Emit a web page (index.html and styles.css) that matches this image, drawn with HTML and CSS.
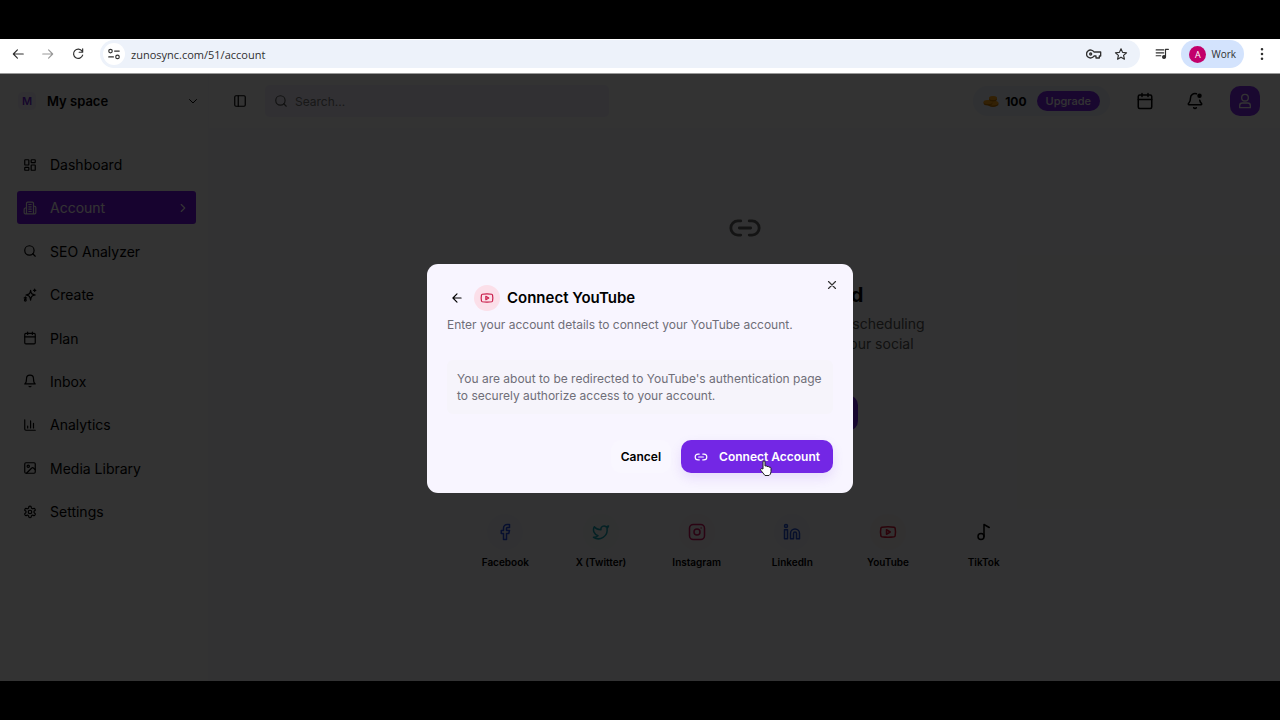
FILE: index.html
```html
<!DOCTYPE html>
<html lang="en">
<head>
<meta charset="utf-8">
<title>Account</title>
<meta name="viewport" content="width=device-width, initial-scale=1">
<link rel="stylesheet" href="styles.css">
</head>
<body>
<svg class="sprite" aria-hidden="true">
  <symbol id="i-link" viewBox="0 0 24 24"><path d="M9 17H7A5 5 0 0 1 7 7h2M15 7h2a5 5 0 1 1 0 10h-2M8 12h8"/></symbol>
  <symbol id="i-search" viewBox="0 0 24 24"><circle cx="11" cy="11" r="8"/><path d="m21 21-4.3-4.3"/></symbol>
  <symbol id="i-calendar" viewBox="0 0 24 24"><rect x="3" y="4" width="18" height="18" rx="2"/><path d="M8 2v4M16 2v4M3 10h18"/></symbol>
  <symbol id="i-youtube" viewBox="0 0 24 24"><path d="M2.5 17a24 24 0 0 1 0-10 2 2 0 0 1 1.4-1.4 50 50 0 0 1 16.200 0A2 2 0 0 1 21.500 7a24 24 0 0 1 0 10 2 2 0 0 1-1.400 1.400 50 50 0 0 1-16.200 0A2 2 0 0 1 2.500 17"/><path d="m10 15 5-3-5-3z"/></symbol>
</svg>

<header class="browser">
  <button class="tool" aria-label="Back"><svg class="icon s14" viewBox="0 0 24 24"><path d="M21 12H4M11 5l-7 7 7 7"/></svg></button>
  <button class="tool muted" aria-label="Forward"><svg class="icon s14" viewBox="0 0 24 24"><path d="M3 12h17M13 5l7 7-7 7"/></svg></button>
  <button class="tool" aria-label="Reload"><svg class="icon s14" viewBox="0 0 24 24"><path d="M19 7a8 8 0 1 0 1 7M20 3v6h-6"/></svg></button>
  <div class="address">
    <button class="site" aria-label="Site information"><svg class="icon s14" viewBox="0 0 24 24"><circle cx="6" cy="7" r="3"/><path d="M13 7h8M3 17h8"/><circle cx="18" cy="17" r="3"/></svg></button>
    <input class="url" aria-label="Address" value="zunosync.com/51/account">
    <button class="tool" aria-label="Passwords"><svg class="icon s16" viewBox="0 0 24 24"><path d="M12 9a6 6 0 1 0 0 6h3v3h5v-3h2V9z"/><circle cx="7" cy="12" r="1.500"/></svg></button>
    <button class="tool" aria-label="Bookmark"><svg class="icon s14" viewBox="0 0 24 24"><path d="m12 3 2.700 6.200 6.800.6-5.100 4.500 1.500 6.700-5.900-3.500L6.100 21l1.500-6.700-5.100-4.500 6.800-.6z"/></svg></button>
  </div>
  <button class="tool" aria-label="Media controls"><svg class="icon s14" viewBox="0 0 24 24"><path d="M2 5h13M2 10h13M2 15h8M18 17V4h5"/><circle class="solid" cx="15.500" cy="17" r="2.500"/></svg></button>
  <button class="profile"><span class="initial">A</span>Work</button>
  <button class="tool" aria-label="More"><svg class="icon s14" viewBox="0 0 24 24"><g class="solid"><circle cx="12" cy="4" r="1.200"/><circle cx="12" cy="12" r="1.200"/><circle cx="12" cy="20" r="1.200"/></g></svg></button>
</header>

<div class="app">
  <aside class="sidebar">
    <button class="space"><span class="badge">M</span><span class="space-name">My space</span><svg class="icon s12" viewBox="0 0 24 24"><path d="m5 9 7 7 7-7"/></svg></button>
    <nav class="nav" aria-label="Main">
      <a href="#"><svg class="icon s14" viewBox="0 0 24 24"><rect x="3" y="3" width="7" height="9" rx="1"/><rect x="14" y="3" width="7" height="5" rx="1"/><rect x="14" y="12" width="7" height="9" rx="1"/><rect x="3" y="16" width="7" height="5" rx="1"/></svg><span>Dashboard</span></a>
      <a href="#" class="active" aria-current="page"><svg class="icon s14" viewBox="0 0 24 24"><path d="M6 22V4a2 2 0 0 1 2-2h8a2 2 0 0 1 2 2v18zM6 12H4a2 2 0 0 0-2 2v6a2 2 0 0 0 2 2h2M18 9h2a2 2 0 0 1 2 2v9a2 2 0 0 1-2 2h-2M10 6h4M10 10h4M10 14h4M10 18h4"/></svg><span>Account</span><svg class="icon s14" viewBox="0 0 24 24"><path d="m9 18 6-6-6-6"/></svg></a>
      <a href="#"><svg class="icon s14"><use href="#i-search"/></svg><span>SEO Analyzer</span></a>
      <a href="#"><svg class="icon s14" viewBox="0 0 24 24"><path d="M13 4c1 6 2 7 8 8-6 1-7 2-8 9-1-7-2-8-8-9 6-1 7-2 8-8zM20 2v4M18 4h4M4 15v4M2 17h4"/><circle cx="4" cy="21" r="1.500"/></svg><span>Create</span></a>
      <a href="#"><svg class="icon s14"><use href="#i-calendar"/></svg><span>Plan</span></a>
      <a href="#"><svg class="icon s14" viewBox="0 0 24 24"><path d="M6 8a6 6 0 0 1 12 0c0 7 3 9 3 9H3s3-2 3-9M10.300 21a2 2 0 0 0 3.400 0"/></svg><span>Inbox</span></a>
      <a href="#"><svg class="icon s14" viewBox="0 0 24 24"><path d="M3 3v16a2 2 0 0 0 2 2h16M18 17V9M13 17V5M8 17v-3"/></svg><span>Analytics</span></a>
      <a href="#"><svg class="icon s14" viewBox="0 0 24 24"><rect x="3" y="3" width="18" height="18" rx="2"/><circle cx="9" cy="9" r="2"/><path d="m21 15-3-3a2 2 0 0 0-3 0l-9 9"/></svg><span>Media Library</span></a>
      <a href="#"><svg class="icon s14" viewBox="0 0 24 24"><path d="M12.200 2h-.4a2 2 0 0 0-2 2v.2a2 2 0 0 1-1 1.700l-.4.3a2 2 0 0 1-2 0l-.2-.1a2 2 0 0 0-2.700.7l-.2.400a2 2 0 0 0 .7 2.700l.2.100a2 2 0 0 1 1 1.700v.5a2 2 0 0 1-1 1.700l-.2.100a2 2 0 0 0-.7 2.700l.2.400a2 2 0 0 0 2.700.7l.2-.1a2 2 0 0 1 2 0l.4.300a2 2 0 0 1 1 1.700v.2a2 2 0 0 0 2 2h.4a2 2 0 0 0 2-2v-.2a2 2 0 0 1 1-1.700l.4-.3a2 2 0 0 1 2 0l.2.100a2 2 0 0 0 2.700-.7l.2-.4a2 2 0 0 0-.7-2.700l-.2-.1a2 2 0 0 1-1-1.700v-.5a2 2 0 0 1 1-1.700l.2-.1a2 2 0 0 0 .7-2.700l-.2-.4a2 2 0 0 0-2.700-.7l-.2.100a2 2 0 0 1-2 0l-.4-.3a2 2 0 0 1-1-1.700V4a2 2 0 0 0-2-2z"/><circle cx="12" cy="12" r="3"/></svg><span>Settings</span></a>
    </nav>
  </aside>
  <div class="content">
    <div class="topbar">
      <button class="plain" aria-label="Toggle sidebar"><svg class="icon s14" viewBox="0 0 24 24"><rect x="3" y="3" width="18" height="18" rx="2"/><path d="M9 3v18"/></svg></button>
      <label class="search"><svg class="icon s14"><use href="#i-search"/></svg><input type="search" placeholder="Search..." aria-label="Search"></label>
      <div class="credits">
        <svg class="coins" viewBox="0 0 16 14" aria-hidden="true"><ellipse class="gold-dark" cx="10" cy="10" rx="5.500" ry="3"/><ellipse class="gold" cx="10" cy="9" rx="5.500" ry="2.500"/><ellipse class="gold-dark" cx="5" cy="9" rx="4.500" ry="2.500"/><ellipse class="gold" cx="5" cy="8" rx="4.500" ry="2"/><ellipse class="gold-dark" cx="10" cy="5" rx="4" ry="2.500"/><ellipse class="gold" cx="10" cy="4" rx="4" ry="2"/></svg>
        <span>100</span><button class="upgrade">Upgrade</button>
      </div>
      <button class="plain" aria-label="Calendar"><svg class="icon s18"><use href="#i-calendar"/></svg></button>
      <button class="plain" aria-label="Notifications"><svg class="icon s18" viewBox="0 0 24 24"><path d="M13.900 2.300A6 6 0 0 0 6 8c0 5-1.400 6-2.700 7.300A1 1 0 0 0 4 17h16a1 1 0 0 0 .7-1.700c-1-1-2-2-2.400-4.300M10.300 21a2 2 0 0 0 3.400 0"/><circle class="solid" cx="18" cy="5" r="2"/></svg></button>
      <button class="avatar" aria-label="Profile"><svg class="icon s16" viewBox="0 0 24 24"><circle cx="12" cy="7" r="5"/><path d="M4 22v-3a4 4 0 0 1 4-4h8a4 4 0 0 1 4 4v3z"/></svg></button>
    </div>
    <main class="empty">
      <svg class="icon empty-icon"><use href="#i-link"/></svg>
      <h1>No Accounts Connected</h1>
      <p>Connect your social media account to start scheduling<br>posts, tracking results and managing all your social</p>
      <button class="primary">Connect Your First Account</button>
      <ul class="platforms">
        <li class="facebook"><span class="disc"><svg class="icon s18" viewBox="0 0 24 24"><path d="M18 2h-3a5 5 0 0 0-5 5v3H7v4h3v8h4v-8h3l1-4h-4V7a1 1 0 0 1 1-1h3z"/></svg></span>Facebook</li>
        <li class="twitter"><span class="disc"><svg class="icon s18" viewBox="0 0 24 24"><path d="M22 4s-.7 2.100-2 3.400c1.600 10-9.400 17.300-18 11.600 2.200.1 4.400-.6 6-2C3 15.500.5 9.600 3 5c2.200 2.600 5.600 4.100 9 4-.9-4.200 4-6.600 7-3.800 1.100 0 3-1.200 3-1.200z"/></svg></span>X (Twitter)</li>
        <li class="instagram"><span class="disc"><svg class="icon s18" viewBox="0 0 24 24"><rect x="2" y="2" width="20" height="20" rx="5"/><circle cx="12" cy="12" r="4"/><path d="M17.500 6.500h.01"/></svg></span>Instagram</li>
        <li class="linkedin"><span class="disc"><svg class="icon s18" viewBox="0 0 24 24"><path d="M16 8a6 6 0 0 1 6 6v7h-4v-7a2 2 0 0 0-4 0v7h-4v-7a6 6 0 0 1 6-6z"/><rect x="2" y="9" width="4" height="12"/><circle cx="4" cy="4" r="2"/></svg></span>LinkedIn</li>
        <li class="youtube"><span class="disc"><svg class="icon s18"><use href="#i-youtube"/></svg></span>YouTube</li>
        <li><span class="disc"><svg class="icon s18" viewBox="0 0 24 24"><circle cx="8" cy="18" r="4"/><path d="M12 18V2l7 4"/></svg></span>TikTok</li>
      </ul>
    </main>
  </div>

  <div class="overlay">
    <section class="dialog" role="dialog" aria-modal="true" aria-labelledby="dialog-title">
      <button class="close" aria-label="Close"><svg class="icon s14" viewBox="0 0 24 24"><path d="M18 6 6 18M6 6l12 12"/></svg></button>
      <div class="dialog-head">
        <button class="plain" aria-label="Back"><svg class="icon s14" viewBox="0 0 24 24"><path d="M19 12H5M12 5l-7 7 7 7"/></svg></button>
        <span class="yt-disc"><svg class="icon s14"><use href="#i-youtube"/></svg></span>
        <h2 id="dialog-title">Connect YouTube</h2>
      </div>
      <p class="lead">Enter your account details to connect your YouTube account.</p>
      <p class="notice">You are about to be redirected to YouTube's authentication page to securely authorize access to your account.</p>
      <div class="actions">
        <button class="cancel">Cancel</button>
        <button class="connect"><svg class="icon s14"><use href="#i-link"/></svg>Connect Account
          <svg class="pointer" viewBox="0 0 12 16" aria-hidden="true"><path d="M3 9V2q0-1.300 1-1.300T5 2v4q1.500-.6 2 .5 1.500-.5 2 .6 2-.4 2 1.400v3q0 3-2 4H5L1 10.500q-.8-1.500.5-2Z"/></svg>
        </button>
      </div>
    </section>
  </div>
</div>
</body>
</html>
```
FILE: styles.css
```css
* { box-sizing: border-box; }
body {
  margin: 0;
  min-height: 100vh;
  padding: 39px 0;
  display: flex;
  flex-direction: column;
  background: #000;
  color: #000;
  font-family: Inter, "Open Sans", sans-serif;
  font-size: 12px;
}
button, input { font: inherit; color: inherit; border: 0; background: none; padding: 0; }
button { display: inline-flex; align-items: center; justify-content: center; }
h1, h2, p, ul { margin: 0; padding: 0; }
.sprite { position: absolute; width: 0; height: 0; }
.icon { flex: none; fill: none; stroke: currentColor; stroke-width: 2; stroke-linecap: round; stroke-linejoin: round; }
.solid { fill: currentColor; }
.s12 { width: 12px; height: 12px; }
.s14 { width: 14px; height: 14px; }
.s16 { width: 16px; height: 16px; }
.s18 { width: 18px; height: 18px; }

/* Browser toolbar */
.browser { display: flex; align-items: center; height: 35px; padding: 0 10px 4px; background: #fff; border-bottom: 1px solid #999; color: #303030; }
.tool { width: 16px; margin-right: 14px; }
.tool.muted { color: #999; }
.tool:last-child { margin-right: 0; }
.address .tool { margin-right: 11px; }
.browser > .address { flex: 1; display: flex; align-items: center; height: 28px; margin: 0 14px 0 0; padding: 0 0 0 3px; border-radius: 14px; background: #edf2fa; }
.site { width: 22px; height: 22px; border-radius: 50%; background: #fff; }
.url { flex: 1; min-width: 0; margin-left: 6px; font-family: "Open Sans", sans-serif; font-size: 11px; outline: 0; }
.profile { height: 28px; gap: 5px; margin: 0 10px 0 -3px; padding: 0 8px; border-radius: 14px; background: #d3e3fd; font-family: "Open Sans", sans-serif; font-size: 10px; }
.initial { width: 17px; line-height: 17px; border-radius: 50%; background: #c2006b; color: #fff; font-size: 9px; }

/* Application */
.app { flex: 1; position: relative; display: flex; background: #fcfcfc; }
.sidebar { width: 209px; flex: none; padding: 0 12px 0 17px; border-right: 1px solid #f8f8fc; }
.space { width: 100%; height: 54px; gap: 11px; padding: 0 0 0 1px; font-size: 13px; font-weight: 600; }
.space-name { flex: 1; text-align: left; }
.space .icon { margin-right: -3px; }
.badge { width: 18px; line-height: 18px; border-radius: 5px; background: #f4f0ff; color: #6d20d8; font-size: 11px; }
.nav { display: flex; flex-direction: column; justify-content: space-between; height: 380px; margin-top: 20px; }
.nav a { display: flex; align-items: center; gap: 13px; height: 33px; padding: 0 6px; border-radius: 3px; color: inherit; text-decoration: none; font-size: 14px; }
.nav span { flex: 1; }
.nav .active { background: #7510e8; color: #fff; }
.content { flex: 1; min-width: 0; background: #f8f8fc; }
.topbar { display: flex; align-items: center; height: 54px; padding: 0 20px 0 24px; background: #fcfcfc; }
.plain { flex: none; }
.search { display: flex; align-items: center; gap: 7px; width: 344px; height: 32px; margin-left: 18px; padding: 0 9px; border-radius: 5px; background: #f4f0ff; color: #555; }
.search input { flex: 1; min-width: 0; outline: 0; }
.search input::placeholder { color: #777; opacity: 1; }
.credits { display: flex; align-items: center; gap: 6px; height: 30px; margin: 0 26px 0 auto; padding: 0 10px; border-radius: 15px; background: #edf2fc; font-weight: 700; }
.coins { width: 16px; height: 14px; }
.gold { fill: #ffa719; }
.gold-dark { fill: #c87800; }
.upgrade { height: 20px; margin-left: 4px; padding: 0 9px; border-radius: 10px; background: #7d24eb; color: #fff; font-size: 11px; font-weight: 500; }
.topbar .plain + .plain { margin: 0 26px 0 32px; }
.avatar { width: 30px; height: 30px; border-radius: 10px; background: #8128f0; color: #fff; }

.empty { display: flex; flex-direction: column; align-items: center; padding-top: 83px; text-align: center; }
.empty-icon { width: 34px; height: 34px; color: #666; }
.empty h1 { margin-top: 36px; font-size: 20px; line-height: 28px; font-weight: 700; }
.empty p { margin-top: 5px; color: #555; font-size: 14px; line-height: 20px; }
.primary { height: 36px; margin-top: 41px; padding: 0 27px; border-radius: 10px; background: #7626e8; color: #fff; font-weight: 600; font-size: 13px; }
.platforms { display: grid; grid-template-columns: repeat(6, 1fr); width: 574px; max-width: 100%; margin-top: 83px; list-style: none; font-size: 10px; font-weight: 600; line-height: 16px; }
.platforms li { display: flex; flex-direction: column; align-items: center; gap: 4px; }
.disc { display: grid; place-items: center; width: 36px; height: 36px; border-radius: 50%; }
.facebook .disc { background: #f4f6fe; color: #244de8; }
.twitter .disc { background: #f3f9fb; color: #16a5b5; }
.instagram .disc { background: #fbf3f8; color: #d01560; }
.linkedin .disc { background: #f3f5fe; color: #2450d8; }
.youtube .disc { background: #fbf3f6; color: #d51535; }

/* Dialog */
.overlay { position: absolute; inset: 0; display: grid; place-items: center; padding-top: 2px; background: rgba(0, 0, 0, .8); }
.dialog { position: relative; width: 426px; max-width: 100%; padding: 20px; border-radius: 11px; background: #f8f5ff; }
.close { position: absolute; top: 14px; right: 14px; color: #333; }
.dialog-head { display: flex; align-items: center; height: 28px; padding-left: 3px; }
.yt-disc { display: grid; place-items: center; width: 26px; height: 26px; margin: 0 7px 0 10px; border-radius: 50%; background: #fbdfe9; color: #c91b48; }
.dialog h2 { font-size: 15px; font-weight: 600; line-height: 24px; }
.lead { margin-top: 4px; color: #6f6e78; line-height: 18px; }
.notice { margin-top: 26px; padding: 10px; border-radius: 6px; background: #f6f4fb; color: #6f6e78; line-height: 17px; }
.actions { display: flex; justify-content: flex-end; gap: 10px; margin-top: 26px; }
.actions button { height: 33px; border-radius: 10px; font-size: 12px; font-weight: 600; }
.cancel { padding: 0 10px; background: #f9f7ff; }
.connect { position: relative; gap: 11px; padding: 0 13px; background: #7327e5; color: #fff; box-shadow: 0 5px 12px #7327e520; }
.pointer { position: absolute; left: 79px; top: 20px; width: 12px; height: 16px; fill: #fff; stroke: #222; stroke-width: 1; }
```
